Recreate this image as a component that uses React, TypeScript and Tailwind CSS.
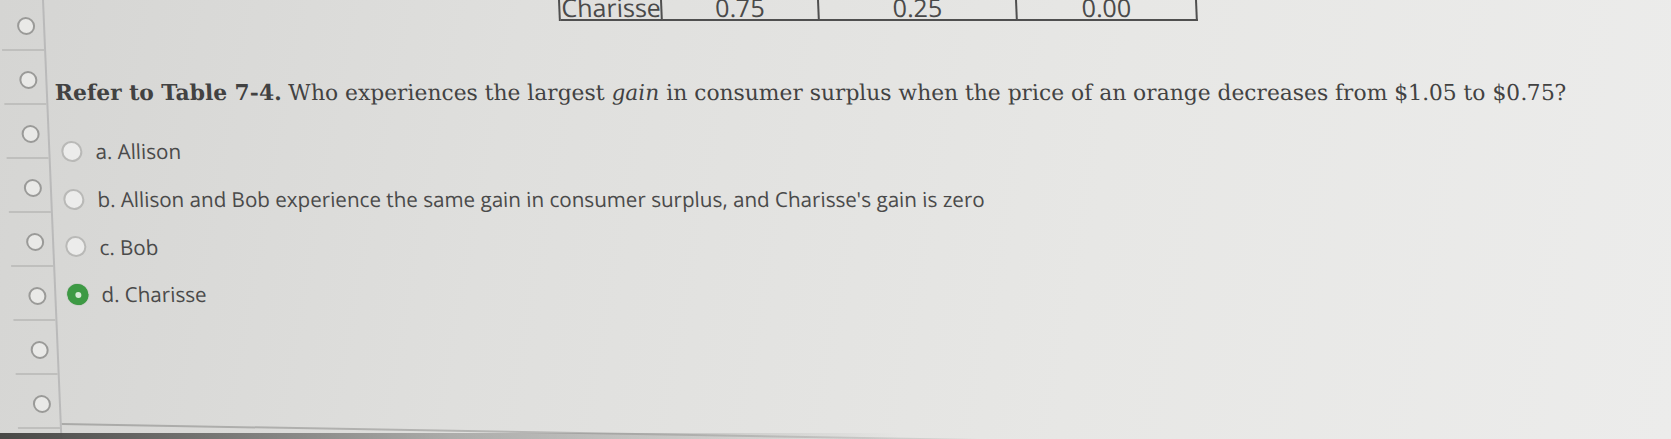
import React from 'react';

type Cell = { text: string; width: string; align: 'left' | 'center' };

const tableCells: Cell[] = [
  { text: 'Charisse', width: 'w-[102px]', align: 'left' },
  { text: '0.75', width: 'w-[157px]', align: 'center' },
  { text: '0.25', width: 'w-[198px]', align: 'center' },
  { text: '0.00', width: 'w-[180px]', align: 'center' },
];

const options = [
  { label: 'a. Allison', checked: false },
  { label: "b. Allison and Bob experience the same gain in consumer surplus, and Charisse's gain is zero", checked: false },
  { label: 'c. Bob', checked: false },
  { label: 'd. Charisse', checked: true },
];

const navRows = Array.from({ length: 8 }, (_, i) => i);

function NavColumn() {
  return (
    <div className="w-[44px] shrink-0 border-r-2 border-[#bababa] flex flex-col -mt-[3px]">
      {navRows.map((i) => (
        <div
          key={i}
          className="h-[54px] shrink-0 border-b-2 border-[#bfbfbd] flex items-center justify-end pr-[8px] pt-[5px]"
        >
          <span className="block size-[18px] rounded-full border-[2.5px] border-[#9a9a98] bg-[#e9e9e7]" />
        </div>
      ))}
    </div>
  );
}

function TableStrip() {
  return (
    <div className="h-[21px] flex items-end overflow-hidden pl-[514px]">
      <div className="flex border-l-2 border-[#4f4f4f] font-['Open_Sans',sans-serif] text-[25px] leading-[24px] text-[#4a4a4a]">
        {tableCells.map((c) => (
          <div
            key={c.text}
            className={`${c.width} border-b-2 border-r-2 border-[#4f4f4f] ${c.align === 'left' ? 'text-left pl-[1px]' : 'text-center'}`}
          >
            {c.text}
          </div>
        ))}
      </div>
    </div>
  );
}

function Radio({ checked }: { checked: boolean }) {
  if (checked) {
    return (
      <span className="flex size-[21px] shrink-0 items-center justify-center rounded-full bg-[#3d9a44] shadow-[0_0_1px_#2f7d35]">
        <span className="block size-[6px] rounded-full bg-[#d6ead6]" />
      </span>
    );
  }
  return <span className="block size-[21px] shrink-0 rounded-full border-2 border-[#b9b9b7] bg-[#ececeb]" />;
}

export default function App() {
  return (
    <div className="relative h-[439px] w-[1671px] overflow-hidden bg-[linear-gradient(100deg,#d5d5d3_0%,#dfdfdd_30%,#e7e7e5_65%,#ececeb_100%)]">
      <div className="flex h-full origin-top-left skew-x-[2.4deg]">
        <NavColumn />

        <div className="flex flex-1 flex-col">
          <TableStrip />

          {/* question */}
          <p className="mt-[57px] pl-[7px] font-['DejaVu_Serif',serif] text-[21.8px] leading-[30px] text-[#424242] whitespace-nowrap">
            <span className="font-bold">Refer to Table 7-4.</span> Who experiences the largest <i>gain</i> in consumer
            surplus when the price of an orange decreases from $1.05 to $0.75?
          </p>

          {/* answers */}
          <div className="mt-[20px] flex flex-col pl-[11px] font-['Open_Sans',sans-serif] text-[20.6px] text-[#4a4a4a]">
            {options.map((o) => (
              <label key={o.label} className="flex h-[47.6px] items-center gap-[13px]">
                <Radio checked={o.checked} />
                <span className="whitespace-nowrap">{o.label}</span>
              </label>
            ))}
          </div>

          <div className="mt-auto mb-[14px] h-[2px] w-[1150px] origin-left rotate-[1deg] bg-gradient-to-r from-[#a9a9a7] via-[#b9b9b7] to-transparent" />
        </div>
      </div>

      {/* screen bezel edge */}
      <div className="absolute bottom-0 left-0 h-[6px] w-[900px] bg-gradient-to-r from-[#484846] via-[#8a8a88]/60 to-transparent" />
    </div>
  );
}
